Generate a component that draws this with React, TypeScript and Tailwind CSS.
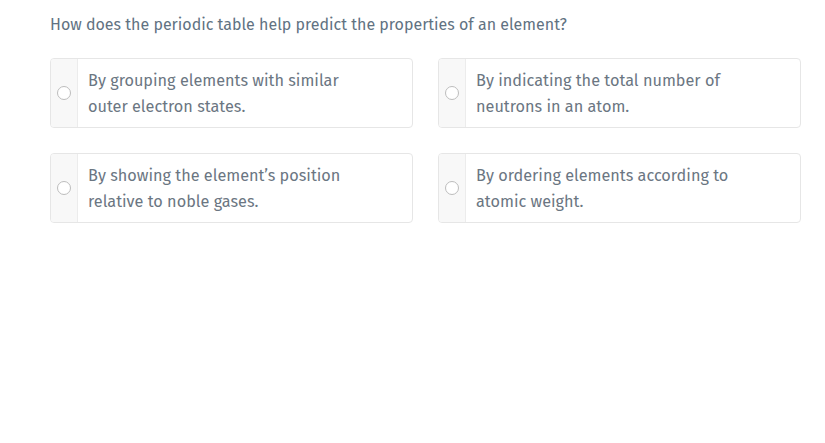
import React from 'react';

const answers: string[][] = [
  ['By grouping elements with similar', 'outer electron states.'],
  ['By indicating the total number of', 'neutrons in an atom.'],
  ['By showing the element\u2019s position', 'relative to noble gases.'],
  ['By ordering elements according to', 'atomic weight.'],
];

const Option: React.FC<{ lines: string[] }> = ({ lines }) => (
  <label className="flex h-[70px] rounded-[4px] border border-[#e6e6e6] bg-white overflow-hidden cursor-pointer">
    <div className="w-[27px] shrink-0 bg-[#f8f8f8] border-r border-[#ececec] flex items-center justify-center">
      <span className="block w-[14px] h-[14px] rounded-full border border-[#bdbdbd] bg-white"></span>
    </div>
    <div className="pl-[10px] pt-[1px] flex flex-col justify-center text-[16.25px] leading-[26px] text-[#6b7682]">
      {lines.map((l, i) => (
        <span key={i} className="whitespace-nowrap">{l}</span>
      ))}
    </div>
  </label>
);

export default function App() {
  return (
    <div
      className="w-[825px] h-[443px] bg-white pl-[50px] pt-[13px]"
      style={{ fontFamily: '"Fira Sans", "Open Sans", Lato, sans-serif' }}
    >
      <h1 className="text-[16px] leading-[24px] text-[#617282] font-normal">
        How does the periodic table help predict the properties of an element?
      </h1>
      <div className="mt-[21px] w-[751px] grid grid-cols-2 gap-x-[25px] gap-y-[25px]">
        {answers.map((a, i) => (
          <Option key={i} lines={a} />
        ))}
      </div>
    </div>
  );
}
